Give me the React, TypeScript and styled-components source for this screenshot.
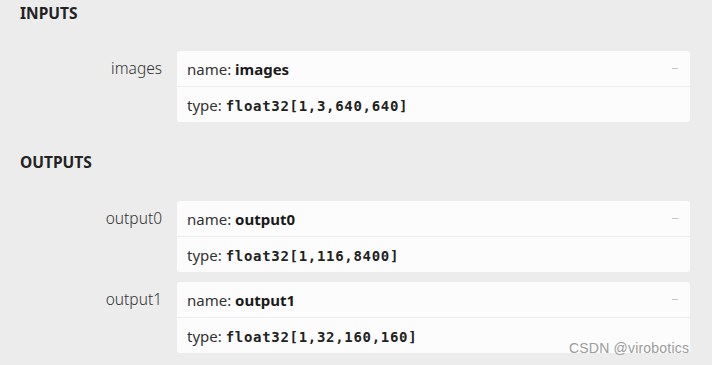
import React from "react";
import styled, { createGlobalStyle } from "styled-components";

interface Port {
  label: string;
  name: string;
  type: string;
}

const inputs: Port[] = [
  { label: "images", name: "images", type: "float32[1,3,640,640]" },
];

const outputs: Port[] = [
  { label: "output0", name: "output0", type: "float32[1,116,8400]" },
  { label: "output1", name: "output1", type: "float32[1,32,160,160]" },
];

const PortRow: React.FC<{ port: Port }> = ({ port }) => (
  <Row>
    <Label>{port.label}</Label>
    <Card>
      <Line>
        <span>
          name: <Strong>{port.name}</Strong>
        </span>
        <Collapse />
      </Line>
      <Line $last>
        <span>
          type: <Code>{port.type}</Code>
        </span>
      </Line>
    </Card>
  </Row>
);

const App: React.FC = () => {
  return (
    <Page>
      <GlobalStyle />
      <Section>
        <Heading>INPUTS</Heading>
        <List>
          {inputs.map((p) => (
            <PortRow key={p.label} port={p} />
          ))}
        </List>
      </Section>
      <Section>
        <Heading>OUTPUTS</Heading>
        <List>
          {outputs.map((p) => (
            <PortRow key={p.label} port={p} />
          ))}
        </List>
      </Section>
      <Watermark>CSDN @virobotics</Watermark>
    </Page>
  );
};

const GlobalStyle = createGlobalStyle`
  html, body {
    margin: 0;
    padding: 0;
    background: #ececec;
  }
`;

const Page = styled.div`
  position: relative;
  width: 712px;
  height: 365px;
  overflow: hidden;
  background: #ececec;
  font-family: "Noto Sans", "Open Sans", sans-serif;
  color: #222;
`;

const Section = styled.section`
  display: flex;
  flex-direction: column;
  margin-bottom: 27px;
`;

const Heading = styled.h2`
  margin: 0;
  padding-left: 20px;
  height: 26px;
  line-height: 26px;
  font-size: 15.5px;
  font-weight: 700;
  color: #222;
`;

const List = styled.div`
  display: flex;
  flex-direction: column;
  gap: 10px;
  margin-top: 25px;

  section + section & {
    margin-top: 26px;
  }
`;

const Row = styled.div`
  display: grid;
  grid-template-columns: 162px 513px;
  column-gap: 15px;
  align-items: start;
`;

const Label = styled.div`
  height: 35px;
  line-height: 35px;
  text-align: right;
  font-size: 15.5px;
  font-weight: 300;
  color: #333;
`;

const Card = styled.div`
  background: #fcfcfc;
  border-radius: 3px;
  display: flex;
  flex-direction: column;
`;

const Line = styled.div<{ $last?: boolean }>`
  height: 35px;
  display: flex;
  align-items: center;
  justify-content: space-between;
  padding: 0 12px 0 10px;
  font-size: 15px;
  color: #333;
  border-bottom: ${(p) => (p.$last ? "none" : "1px solid #eeeeee")};
`;

const Strong = styled.b`
  font-weight: 700;
  color: #1a1a1a;
`;

const Code = styled.code`
  font-family: "DejaVu Sans Mono", "Liberation Mono", monospace;
  font-size: 14px;
  font-weight: 700;
  letter-spacing: 0.7px;
  color: #222;
`;

const Collapse = styled.span`
  display: block;
  width: 6px;
  height: 1px;
  background: #c4c4c4;
`;

const Watermark = styled.div`
  position: absolute;
  left: 569px;
  top: 340px;
  font-family: "Liberation Sans", sans-serif;
  font-size: 14px;
  color: #9b9b9b;
  letter-spacing: 0.2px;
`;

export default App;
